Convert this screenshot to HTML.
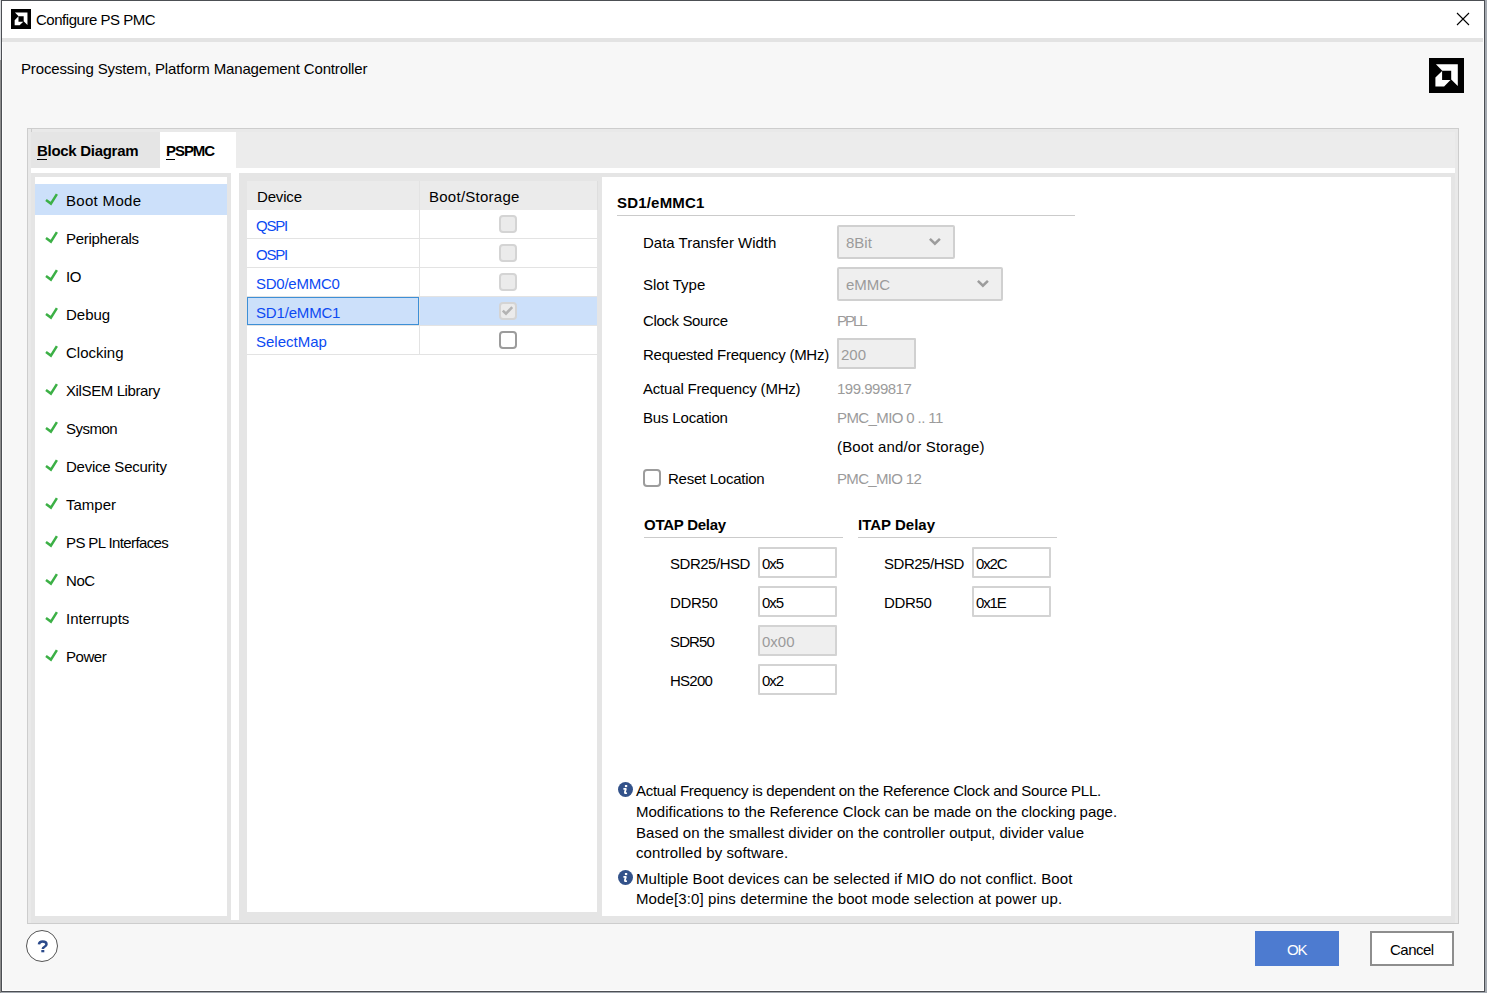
<!DOCTYPE html>
<html><head><meta charset="utf-8">
<style>
html,body{margin:0;padding:0;}
body{width:1487px;height:993px;position:relative;overflow:hidden;background:#a4a9b0;font-family:"Liberation Sans",sans-serif;font-size:15px;color:#000;}
.a{position:absolute;}
.t{position:absolute;line-height:15px;white-space:nowrap;font-size:15px;}
.b{font-weight:bold;}
.g{color:#9b9b9b;}
.lnk{color:#0c4af2;}
</style></head><body>
<!-- desktop left strip -->
<div class="a" style="left:0;top:0;width:1px;height:993px;background:#8c8c8c"></div><div class="a" style="left:0;top:0;width:1px;height:60px;background:#d9dbde"></div>
<!-- window -->
<div class="a" style="left:1px;top:0;width:1482px;height:990px;border:1px solid #4c4f54;background:#f7f7f7"></div>
<div class="a" style="left:1483px;top:1px;width:1px;height:990px;background:#fff"></div>
<div class="a" style="left:2px;top:990px;width:1482px;height:1px;background:#fff"></div>
<div class="a" style="left:2px;top:42px;width:1px;height:948px;background:#fff"></div>
<!-- title bar -->
<div class="a" style="left:2px;top:1px;width:1481px;height:37px;background:#fff"></div>
<div class="a" style="left:2px;top:38px;width:1481px;height:4px;background:#e3e3e3"></div>
<!-- title icon -->
<svg class="a" style="left:11px;top:9px" width="20" height="20" viewBox="0 0 35 35">
<rect width="35" height="35" fill="#000"/>
<path d="M6.9 6.2H28.8V27.9L22.2 21.5V12.8H13.3Z M6.4 19.5L13.1 12.9V22.1H21.5L15.1 28.4H6.4Z" fill="#fff"/>
</svg>
<div class="t" style="left:36px;top:12px;letter-spacing:-0.47px;">Configure PS PMC</div>
<!-- close -->
<svg class="a" style="left:1456px;top:12px" width="15" height="15" viewBox="0 0 15 15">
<path d="M1 1L13 13M13 1L1 13" stroke="#000" stroke-width="1.1" fill="none"/>
</svg>
<!-- subtitle -->
<div class="t" style="left:21px;top:61px;letter-spacing:-0.146px;">Processing System, Platform Management Controller</div>
<!-- big logo -->
<svg class="a" style="left:1429px;top:58px" width="35" height="35" viewBox="0 0 35 35">
<rect width="35" height="35" fill="#000"/>
<path d="M6.9 6.2H28.8V27.9L22.2 21.5V12.8H13.3Z M6.4 19.5L13.1 12.9V22.1H21.5L15.1 28.4H6.4Z" fill="#fff"/>
</svg>

<!-- TAB PANE -->
<div class="a" style="left:27px;top:128px;width:1430px;height:794px;border:1px solid #cdcdcd;background:#e9e9e9"></div>
<div class="a" style="left:31px;top:132px;width:1424px;height:36px;background:#ececec"></div>
<div class="a" style="left:31px;top:168px;width:1424px;height:5px;background:#fff"></div>
<div class="a" style="left:31px;top:173px;width:1424px;height:750px;background:#e5e5e5"></div>
<div class="a" style="left:31px;top:129px;width:1px;height:3px;background:#cdcdcd"></div>
<!-- selected tab -->
<div class="a" style="left:31px;top:132px;width:129px;height:36px;background:#e5e5e5"></div>
<div class="a" style="left:160px;top:132px;width:76px;height:36px;background:#fff"></div>
<div class="t b" style="left:37px;top:143px;letter-spacing:-0.29px;">Block Diagram</div>
<div class="a" style="left:37px;top:159px;width:10px;height:1px;background:#000"></div>
<div class="t b" style="left:166px;top:143px;letter-spacing:-1.05px;">PSPMC</div>
<div class="a" style="left:166px;top:159px;width:9px;height:1px;background:#000"></div>

<!-- white splitter strip -->
<div class="a" style="left:231px;top:173px;width:8px;height:747px;background:#fff"></div>

<!-- LEFT NAV -->
<div class="a" style="left:35px;top:177px;width:192px;height:739px;background:#fff"></div>
<div class="a" style="left:35px;top:184px;width:192px;height:31px;background:#cce0fa"></div>
<svg class="a" style="left:44px;top:193px" width="16" height="14"><path d="M2 7L6.9 10.6L12.9 1.2" stroke="#3cb046" stroke-width="2.5" fill="none"/></svg>
<div class="t" style="left:66px;top:193px;letter-spacing:0.31px;">Boot Mode</div>
<svg class="a" style="left:44px;top:231px" width="16" height="14"><path d="M2 7L6.9 10.6L12.9 1.2" stroke="#3cb046" stroke-width="2.5" fill="none"/></svg>
<div class="t" style="left:66px;top:231px;letter-spacing:-0.28px;">Peripherals</div>
<svg class="a" style="left:44px;top:269px" width="16" height="14"><path d="M2 7L6.9 10.6L12.9 1.2" stroke="#3cb046" stroke-width="2.5" fill="none"/></svg>
<div class="t" style="left:66px;top:269px;letter-spacing:-0.4px;">IO</div>
<svg class="a" style="left:44px;top:307px" width="16" height="14"><path d="M2 7L6.9 10.6L12.9 1.2" stroke="#3cb046" stroke-width="2.5" fill="none"/></svg>
<div class="t" style="left:66px;top:307px;">Debug</div>
<svg class="a" style="left:44px;top:345px" width="16" height="14"><path d="M2 7L6.9 10.6L12.9 1.2" stroke="#3cb046" stroke-width="2.5" fill="none"/></svg>
<div class="t" style="left:66px;top:345px;">Clocking</div>
<svg class="a" style="left:44px;top:383px" width="16" height="14"><path d="M2 7L6.9 10.6L12.9 1.2" stroke="#3cb046" stroke-width="2.5" fill="none"/></svg>
<div class="t" style="left:66px;top:383px;letter-spacing:-0.385px;">XilSEM Library</div>
<svg class="a" style="left:44px;top:421px" width="16" height="14"><path d="M2 7L6.9 10.6L12.9 1.2" stroke="#3cb046" stroke-width="2.5" fill="none"/></svg>
<div class="t" style="left:66px;top:421px;letter-spacing:-0.52px;">Sysmon</div>
<svg class="a" style="left:44px;top:459px" width="16" height="14"><path d="M2 7L6.9 10.6L12.9 1.2" stroke="#3cb046" stroke-width="2.5" fill="none"/></svg>
<div class="t" style="left:66px;top:459px;letter-spacing:-0.236px;">Device Security</div>
<svg class="a" style="left:44px;top:497px" width="16" height="14"><path d="M2 7L6.9 10.6L12.9 1.2" stroke="#3cb046" stroke-width="2.5" fill="none"/></svg>
<div class="t" style="left:66px;top:497px;">Tamper</div>
<svg class="a" style="left:44px;top:535px" width="16" height="14"><path d="M2 7L6.9 10.6L12.9 1.2" stroke="#3cb046" stroke-width="2.5" fill="none"/></svg>
<div class="t" style="left:66px;top:535px;letter-spacing:-0.613px;">PS PL Interfaces</div>
<svg class="a" style="left:44px;top:573px" width="16" height="14"><path d="M2 7L6.9 10.6L12.9 1.2" stroke="#3cb046" stroke-width="2.5" fill="none"/></svg>
<div class="t" style="left:66px;top:573px;letter-spacing:-0.45px;">NoC</div>
<svg class="a" style="left:44px;top:611px" width="16" height="14"><path d="M2 7L6.9 10.6L12.9 1.2" stroke="#3cb046" stroke-width="2.5" fill="none"/></svg>
<div class="t" style="left:66px;top:611px;">Interrupts</div>
<svg class="a" style="left:44px;top:649px" width="16" height="14"><path d="M2 7L6.9 10.6L12.9 1.2" stroke="#3cb046" stroke-width="2.5" fill="none"/></svg>
<div class="t" style="left:66px;top:649px;letter-spacing:-0.45px;">Power</div>

<!-- MIDDLE TABLE -->
<div class="a" style="left:247px;top:181px;width:350px;height:731px;background:#fff"></div>
<div class="a" style="left:247px;top:181px;width:350px;height:29px;background:#ebebeb"></div>
<div class="a" style="left:597px;top:181px;width:1px;height:29px;background:#dedede"></div>
<div class="t" style="left:257px;top:189px;letter-spacing:-0.16px;">Device</div>
<div class="t" style="left:429px;top:189px;letter-spacing:0.255px;">Boot/Storage</div>
<div class="a" style="left:247px;top:297px;width:350px;height:28px;background:#cce0fa"></div>
<div class="a" style="left:247px;top:297px;width:170px;height:26px;border:1px solid #3d8fd6;"></div>
<div class="a" style="left:247px;top:238px;width:350px;height:1px;background:#e3e3e3"></div>
<div class="a" style="left:247px;top:267px;width:350px;height:1px;background:#e3e3e3"></div>
<div class="a" style="left:247px;top:296px;width:350px;height:1px;background:#e3e3e3"></div>
<div class="a" style="left:247px;top:325px;width:350px;height:1px;background:#e3e3e3"></div>
<div class="a" style="left:247px;top:354px;width:350px;height:1px;background:#e3e3e3"></div>
<div class="a" style="left:419px;top:181px;width:1px;height:173px;background:#e3e3e3"></div>
<div class="t lnk" style="left:256px;top:218px;letter-spacing:-1.267px;">QSPI</div>
<div class="a" style="left:499px;top:215px;box-sizing:border-box;width:17.5px;height:17.5px;border:2px solid #d4d4d4;border-radius:4px;background:#ebebeb"></div>
<div class="t lnk" style="left:256px;top:247px;letter-spacing:-1.267px;">OSPI</div>
<div class="a" style="left:499px;top:244px;box-sizing:border-box;width:17.5px;height:17.5px;border:2px solid #d4d4d4;border-radius:4px;background:#ebebeb"></div>
<div class="t lnk" style="left:256px;top:276px;letter-spacing:-0.25px;">SD0/eMMC0</div>
<div class="a" style="left:499px;top:273px;box-sizing:border-box;width:17.5px;height:17.5px;border:2px solid #d4d4d4;border-radius:4px;background:#ebebeb"></div>
<div class="t lnk" style="left:256px;top:305px;letter-spacing:-0.175px;">SD1/eMMC1</div>
<div class="a" style="left:499px;top:302px;box-sizing:border-box;width:17.5px;height:17.5px;border:2px solid #d4d4d4;border-radius:4px;background:#ebebeb"></div>
<svg class="a" style="left:499px;top:302px" width="17" height="17"><path d="M3.8 8.6L7 11.6L13.2 5.2" stroke="#b3b3b3" stroke-width="2.6" fill="none"/></svg>
<div class="t lnk" style="left:256px;top:334px;">SelectMap</div>
<div class="a" style="left:499px;top:331px;box-sizing:border-box;width:17.5px;height:17.5px;border:2px solid #9c9c9c;border-radius:4px;background:#fff"></div>

<!-- RIGHT PANEL -->
<div class="a" style="left:602px;top:177px;width:849px;height:739px;background:#fff"></div>
<div class="t b" style="left:617px;top:195px;letter-spacing:0.188px;">SD1/eMMC1</div>
<div class="a" style="left:617px;top:215px;width:458px;height:1px;background:#cbcbcb"></div>
<div class="t" style="left:643px;top:235px;">Data Transfer Width</div>
<div class="t" style="left:643px;top:277px;">Slot Type</div>
<div class="t" style="left:643px;top:313px;letter-spacing:-0.382px;">Clock Source</div>
<div class="t" style="left:643px;top:347px;letter-spacing:-0.267px;">Requested Frequency (MHz)</div>
<div class="t" style="left:643px;top:381px;letter-spacing:-0.195px;">Actual Frequency (MHz)</div>
<div class="t" style="left:643px;top:410px;letter-spacing:-0.164px;">Bus Location</div>
<div class="t" style="left:837px;top:439px;letter-spacing:0.165px;">(Boot and/or Storage)</div>
<div class="a" style="left:643px;top:469px;box-sizing:border-box;width:17.5px;height:17.5px;border:2px solid #9c9c9c;border-radius:4px;background:#fff"></div>
<div class="t" style="left:668px;top:471px;letter-spacing:-0.262px;">Reset Location</div>
<div class="t g" style="left:837px;top:313px;letter-spacing:-2.067px;">PPLL</div>
<div class="t g" style="left:837px;top:381px;letter-spacing:-0.5px;">199.999817</div>
<div class="t g" style="left:837px;top:410px;letter-spacing:-0.607px;">PMC_MIO 0 .. 11</div>
<div class="t g" style="left:837px;top:471px;letter-spacing:-0.678px;">PMC_MIO 12</div>
<div class="a" style="left:837px;top:225px;width:114px;height:30px;border:2px solid #d0d0d0;border-radius:2px;background:#efefef"></div>
<div class="t g" style="left:846px;top:235px;">8Bit</div>
<svg class="a" style="left:928px;top:237px" width="14" height="10"><path d="M1.9 1.9L6.9 6.6L11.9 1.9" stroke="#9c9c9c" stroke-width="2.6" fill="none"/></svg>
<div class="a" style="left:837px;top:267px;width:162px;height:30px;border:2px solid #d0d0d0;border-radius:2px;background:#efefef"></div>
<div class="t g" style="left:846px;top:277px;">eMMC</div>
<svg class="a" style="left:976px;top:279px" width="14" height="10"><path d="M1.9 1.9L6.9 6.6L11.9 1.9" stroke="#9c9c9c" stroke-width="2.6" fill="none"/></svg>
<div class="a" style="left:837px;top:338px;width:75px;height:27px;border:2px solid #d0d0d0;border-radius:1px;background:#efefef"></div>
<div class="t g" style="left:841px;top:347px;">200</div>
<div class="t b" style="left:644px;top:517px;letter-spacing:-0.256px;">OTAP Delay</div>
<div class="a" style="left:644px;top:537px;width:199px;height:1px;background:#cbcbcb"></div>
<div class="t b" style="left:858px;top:517px;">ITAP Delay</div>
<div class="a" style="left:858px;top:537px;width:199px;height:1px;background:#cbcbcb"></div>
<div class="t" style="left:670px;top:556px;letter-spacing:-0.475px;">SDR25/HSD</div>
<div class="a" style="left:758px;top:547px;width:75px;height:27px;border:2px solid #d3d3d3;border-radius:1px;background:#fff"></div>
<div class="t" style="left:762px;top:556px;color:#000;letter-spacing:-1.0px;">0x5</div>
<div class="t" style="left:670px;top:595px;letter-spacing:-0.35px;">DDR50</div>
<div class="a" style="left:758px;top:586px;width:75px;height:27px;border:2px solid #d3d3d3;border-radius:1px;background:#fff"></div>
<div class="t" style="left:762px;top:595px;color:#000;letter-spacing:-1.0px;">0x5</div>
<div class="t" style="left:670px;top:634px;letter-spacing:-0.875px;">SDR50</div>
<div class="a" style="left:758px;top:625px;width:75px;height:27px;border:2px solid #d3d3d3;border-radius:1px;background:#efefef"></div>
<div class="t" style="left:762px;top:634px;color:#9b9b9b">0x00</div>
<div class="t" style="left:670px;top:673px;letter-spacing:-0.75px;">HS200</div>
<div class="a" style="left:758px;top:664px;width:75px;height:27px;border:2px solid #d3d3d3;border-radius:1px;background:#fff"></div>
<div class="t" style="left:762px;top:673px;color:#000;letter-spacing:-1.0px;">0x2</div>
<div class="t" style="left:884px;top:556px;letter-spacing:-0.475px;">SDR25/HSD</div>
<div class="a" style="left:972px;top:547px;width:75px;height:27px;border:2px solid #d3d3d3;border-radius:1px;background:#fff"></div>
<div class="t" style="left:976px;top:556px;color:#000;letter-spacing:-1.17px;">0x2C</div>
<div class="t" style="left:884px;top:595px;letter-spacing:-0.35px;">DDR50</div>
<div class="a" style="left:972px;top:586px;width:75px;height:27px;border:2px solid #d3d3d3;border-radius:1px;background:#fff"></div>
<div class="t" style="left:976px;top:595px;color:#000;letter-spacing:-1.13px;">0x1E</div>
<svg class="a" style="left:618px;top:782px" width="15" height="15" viewBox="0 0 15 15"><circle cx="7.5" cy="7.5" r="7.5" fill="#33528a"/><rect x="6.9" y="3" width="2.3" height="2.1" fill="#fff"/><path d="M5.4 6.9H7.8L6.9 10.3Q6.6 11.5 8.9 11.1" stroke="#fff" stroke-width="1.8" fill="none" stroke-linejoin="round"/></svg>
<svg class="a" style="left:618px;top:870px" width="15" height="15" viewBox="0 0 15 15"><circle cx="7.5" cy="7.5" r="7.5" fill="#33528a"/><rect x="6.9" y="3" width="2.3" height="2.1" fill="#fff"/><path d="M5.4 6.9H7.8L6.9 10.3Q6.6 11.5 8.9 11.1" stroke="#fff" stroke-width="1.8" fill="none" stroke-linejoin="round"/></svg>
<div class="t" style="left:636px;top:783px;letter-spacing:-0.276px;">Actual Frequency is dependent on the Reference Clock and Source PLL.</div>
<div class="t" style="left:636px;top:804px;">Modifications to the Reference Clock can be made on the clocking page.</div>
<div class="t" style="left:636px;top:825px;letter-spacing:0.028px;">Based on the smallest divider on the controller output, divider value</div>
<div class="t" style="left:636px;top:845px;letter-spacing:0.091px;">controlled by software.</div>
<div class="t" style="left:636px;top:871px;letter-spacing:0.082px;">Multiple Boot devices can be selected if MIO do not conflict. Boot</div>
<div class="t" style="left:636px;top:891px;letter-spacing:0.112px;">Mode[3:0] pins determine the boot mode selection at power up.</div>

<!-- BOTTOM -->
<div class="a" style="left:26px;top:930px;width:30px;height:30px;border:1px solid #555;border-radius:50%;background:#fff"></div>
<svg class="a" style="left:26px;top:930px" width="32" height="32"><path d="M12.9 14.4Q13.3 11.5 16.7 11.5Q20.5 11.5 20.5 14.3Q20.5 15.9 18.3 17Q16.8 17.8 16.8 18.9" stroke="#2b4a8b" stroke-width="2.5" fill="none"/><rect x="15.3" y="20" width="3" height="2.3" fill="#2b4a8b"/></svg>
<div class="a" style="left:1255px;top:931px;width:84px;height:35px;background:#4d7bd0"></div>
<div class="t" style="left:1287px;top:942px;color:#fff;letter-spacing:-1.2px;">OK</div>
<div class="a" style="left:1370px;top:931px;width:80px;height:31px;border:2px solid #8e8e8e;background:#fff"></div>
<div class="t" style="left:1390px;top:942px;letter-spacing:-0.5px;">Cancel</div>
</body></html>
